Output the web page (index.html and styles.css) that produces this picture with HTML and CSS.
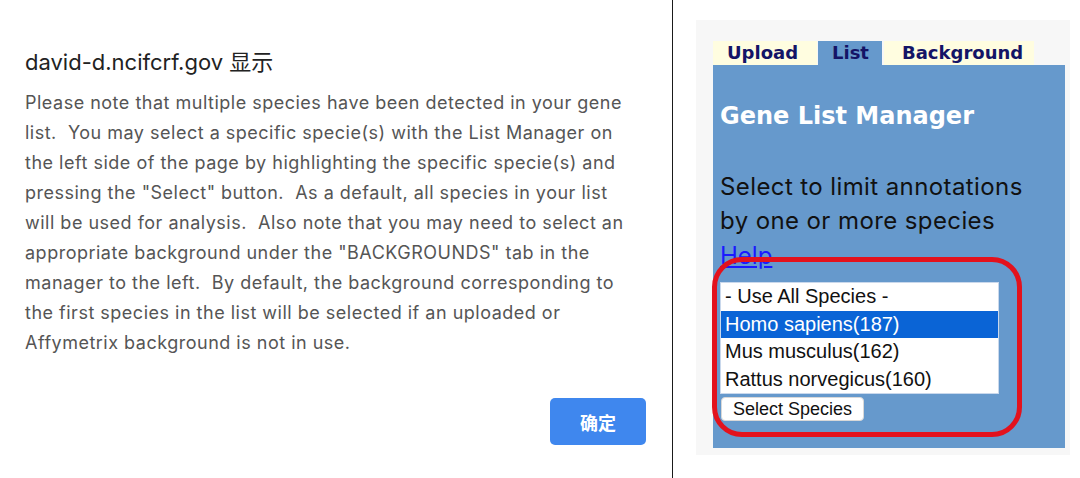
FILE: index.html
```html
<!DOCTYPE html>
<html>
<head>
<meta charset="utf-8">
<link rel="stylesheet" href="styles.css">
</head>
<body>
<div class="page">
  <section class="dialog">
    <h1 class="dialog-title">david-d.ncifcrf.gov 显示</h1>
    <p class="dialog-text">Please note that multiple species have been detected in your gene<br>list.&nbsp; You may select a specific specie(s) with the List Manager on<br>the left side of the page by highlighting the specific specie(s) and<br>pressing the "Select" button.&nbsp; As a default, all species in your list<br>will be used for analysis.&nbsp; Also note that you may need to select an<br>appropriate background under the "BACKGROUNDS" tab in the<br>manager to the left.&nbsp; By default, the background corresponding to<br>the first species in the list will be selected if an uploaded or<br>Affymetrix background is not in use.</p>
    <div class="dialog-actions">
      <button class="ok-btn">确定</button>
    </div>
  </section>
  <section class="side">
    <div class="side-panel">
      <div class="tabs">
        <div class="tab tab-upload">Upload</div>
        <div class="tab tab-active">List</div>
        <div class="tab tab-bg">Background</div>
      </div>
      <div class="manager">
        <h2 class="manager-title">Gene List Manager</h2>
        <p class="manager-text">Select to limit annotations<br>by one or more species</p>
        <a class="help" href="#">Help</a>
        <div class="species-area">
          <div class="highlight-ring"></div>
          <div class="species-list">
            <div class="species-item">- Use All Species -</div>
            <div class="species-item selected">Homo sapiens(187)</div>
            <div class="species-item">Mus musculus(162)</div>
            <div class="species-item">Rattus norvegicus(160)</div>
          </div>
          <button class="select-btn">Select Species</button>
        </div>
      </div>
    </div>
  </section>
</div>
</body>
</html>
```

FILE: styles.css
```css
html, body {
  margin: 0;
  padding: 0;
  background: #ffffff;
}
.page {
  display: flex;
  width: 1080px;
  height: 478px;
  overflow: hidden;
}
.dialog {
  width: 673px;
  box-sizing: border-box;
  border-right: 1.5px solid #1a1a1a;
  padding: 49px 0 0 25px;
  display: flex;
  flex-direction: column;
}
.dialog-title {
  margin: 0;
  font-family: "Inter", "Noto Sans CJK SC", sans-serif;
  font-weight: normal;
  font-size: 22px;
  line-height: 26px;
  color: #222222;
}
.dialog-text {
  margin: 13px 0 0 0;
  font-family: "Inter", sans-serif;
  font-size: 18px;
  letter-spacing: 0.5px;
  line-height: 30px;
  color: #555555;
  white-space: nowrap;
}
.dialog-actions {
  display: flex;
  justify-content: flex-end;
  padding-right: 26px;
  margin-top: 40px;
}
.ok-btn {
  width: 96px;
  height: 47px;
  border: none;
  border-radius: 5px;
  background: #3f87ee;
  color: #ffffff;
  font-family: "Noto Sans CJK SC", sans-serif;
  font-weight: bold;
  font-size: 18px;
  padding: 0;
}
.side {
  flex: 1;
  padding: 20px 10px 0 23px;
}
.side-panel {
  background: #f7f7f7;
  height: 435px;
  padding: 21px 0 0 17px;
  box-sizing: border-box;
}
.tabs {
  display: flex;
  height: 24px;
  font-family: "DejaVu Sans", sans-serif;
  font-weight: bold;
  font-size: 18px;
  line-height: 24px;
  color: #141466;
}
.tab {
  padding: 0 13px 0 14px;
}
.tab-upload {
  background: #fffde0;
  width: 77px;
}
.tab-active {
  background: #6699cc;
  margin-left: 1px;
  width: 37px;
}
.tab-bg {
  background: #fffde0;
  margin-left: 2px;
  padding-left: 18px;
  padding-right: 8px;
  width: 124px;
}
.manager {
  width: 352px;
  height: 383px;
  background: #6699cc;
  padding: 0 0 0 7px;
  box-sizing: border-box;
}
.manager-title {
  margin: 0;
  padding-top: 36px;
  font-family: "DejaVu Sans", sans-serif;
  font-weight: bold;
  font-size: 24px;
  line-height: 30px;
  color: #ffffff;
}
.manager-text {
  margin: 39px 0 0 0;
  font-family: "Inter", sans-serif;
  font-size: 24px;
  letter-spacing: 0.4px;
  line-height: 34px;
  color: #111111;
}
.help {
  display: block;
  font-family: "Inter", sans-serif;
  font-size: 24px;
  line-height: 35px;
  color: #1a1aff;
  text-decoration: underline;
  width: 54px;
}
.species-area {
  position: relative;
  padding-top: 9px;
}
.highlight-ring {
  position: absolute;
  left: -8px;
  top: -16px;
  width: 300px;
  height: 170px;
  border: 5px solid #e3121d;
  border-radius: 30px;
  pointer-events: none;
}
.species-list {
  width: 279px;
  background: #ffffff;
  border: 1px solid #c9d8ec;
  box-sizing: border-box;
  font-family: "Liberation Sans", sans-serif;
  font-size: 20px;
  color: #111111;
}
.species-item {
  height: 27.5px;
  line-height: 27.5px;
  padding-left: 4px;
}
.species-item.selected {
  background: #0a64d6;
  color: #ffffff;
}
.select-btn {
  margin-top: 3px;
  margin-left: 1px;
  width: 143px;
  height: 24px;
  background: #ffffff;
  border: 1px solid #d8d8d8;
  border-radius: 4px;
  font-family: "Liberation Sans", sans-serif;
  font-size: 18px;
  line-height: 22px;
  color: #111111;
  padding: 0;
}
```
